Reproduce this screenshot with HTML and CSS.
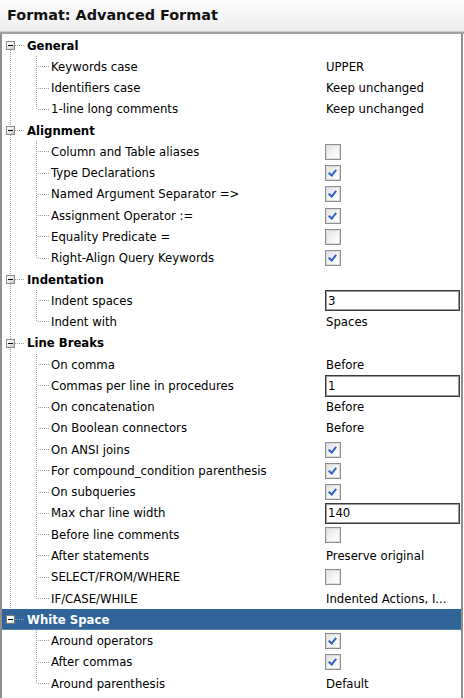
FILE: index.html
```html
<!DOCTYPE html>
<html>
<head>
<meta charset="utf-8">
<link rel="stylesheet" href="styles.css">
</head>
<body>
<div class="header">Format: Advanced Format</div>
<div class="tree">
  <div class="group">
    <div class="row root"><span class="exp"></span><span class="name">General</span></div>
    <div class="kids">
      <div class="row kid"><span class="name">Keywords case</span><span class="val">UPPER</span></div>
      <div class="row kid"><span class="name">Identifiers case</span><span class="val">Keep unchanged</span></div>
      <div class="row kid"><span class="name">1-line long comments</span><span class="val">Keep unchanged</span></div>
    </div>
  </div>
  <div class="group">
    <div class="row root"><span class="exp"></span><span class="name">Alignment</span></div>
    <div class="kids">
      <div class="row kid"><span class="name">Column and Table aliases</span><span class="val"><span class="cb"></span></span></div>
      <div class="row kid"><span class="name">Type Declarations</span><span class="val"><span class="cb on"></span></span></div>
      <div class="row kid"><span class="name">Named Argument Separator =&gt;</span><span class="val"><span class="cb on"></span></span></div>
      <div class="row kid"><span class="name">Assignment Operator :=</span><span class="val"><span class="cb on"></span></span></div>
      <div class="row kid"><span class="name">Equality Predicate =</span><span class="val"><span class="cb"></span></span></div>
      <div class="row kid"><span class="name">Right-Align Query Keywords</span><span class="val"><span class="cb on"></span></span></div>
    </div>
  </div>
  <div class="group">
    <div class="row root"><span class="exp"></span><span class="name">Indentation</span></div>
    <div class="kids">
      <div class="row kid"><span class="name">Indent spaces</span><span class="val"><span class="field">3</span></span></div>
      <div class="row kid"><span class="name">Indent with</span><span class="val">Spaces</span></div>
    </div>
  </div>
  <div class="group">
    <div class="row root"><span class="exp"></span><span class="name">Line Breaks</span></div>
    <div class="kids">
      <div class="row kid"><span class="name">On comma</span><span class="val">Before</span></div>
      <div class="row kid"><span class="name">Commas per line in procedures</span><span class="val"><span class="field">1</span></span></div>
      <div class="row kid"><span class="name">On concatenation</span><span class="val">Before</span></div>
      <div class="row kid"><span class="name">On Boolean connectors</span><span class="val">Before</span></div>
      <div class="row kid"><span class="name">On ANSI joins</span><span class="val"><span class="cb on"></span></span></div>
      <div class="row kid"><span class="name">For compound_condition parenthesis</span><span class="val"><span class="cb on"></span></span></div>
      <div class="row kid"><span class="name">On subqueries</span><span class="val"><span class="cb on"></span></span></div>
      <div class="row kid"><span class="name">Max char line width</span><span class="val"><span class="field">140</span></span></div>
      <div class="row kid"><span class="name">Before line comments</span><span class="val"><span class="cb"></span></span></div>
      <div class="row kid"><span class="name">After statements</span><span class="val">Preserve original</span></div>
      <div class="row kid"><span class="name">SELECT/FROM/WHERE</span><span class="val"><span class="cb"></span></span></div>
      <div class="row kid"><span class="name">IF/CASE/WHILE</span><span class="val">Indented Actions, I...</span></div>
    </div>
  </div>
  <div class="group last">
    <div class="row root selected"><span class="exp"></span><span class="name">White Space</span></div>
    <div class="kids">
      <div class="row kid"><span class="name">Around operators</span><span class="val"><span class="cb on"></span></span></div>
      <div class="row kid"><span class="name">After commas</span><span class="val"><span class="cb on"></span></span></div>
      <div class="row kid"><span class="name">Around parenthesis</span><span class="val">Default</span></div>
    </div>
  </div>
</div>
</body>
</html>
```
FILE: styles.css
```css
* { box-sizing: border-box; }
html, body { margin: 0; padding: 0; background: #fff; }
body {
  width: 464px;
  height: 698px;
  overflow: hidden;
  font-family: "DejaVu Sans", Verdana, sans-serif;
  font-size: 11.7px;
  color: #000;
}
.header {
  height: 34px;
  background: linear-gradient(#fbfbfb, #eeeeee);
  border-bottom: 2px solid #a2a2a2;
  box-shadow: inset 0 -1px 0 #cfcfcf;
  font-weight: bold;
  font-size: 14.4px;
  line-height: 31px;
  padding-left: 7px;
  color: #111;
}
.tree {
  width: 463px;
  height: 664px;
  padding-top: 1px;
  border-left: 2px solid #8f8f8f;
  border-right: 2px solid #8f8f8f;
  background: #fff;
}
.group { position: relative; }
.group::before {
  content: "";
  position: absolute;
  left: 8px;
  top: 10.6px;
  bottom: -10.6px;
  width: 1px;
  background: repeating-linear-gradient(to bottom, #a0a0a0 0 1px, transparent 1px 2px);
}
.group.last::before { display: none; }
.row {
  position: relative;
  height: 21.27px;
  display: grid;
  grid-template-columns: 323px 1fr;
  align-items: center;
  white-space: nowrap;
}
.root {
  display: flex;
  align-items: center;
  font-weight: bold;
}
.root::after {
  content: "";
  position: absolute;
  left: 13px;
  width: 10px;
  top: 10px;
  height: 1px;
  background: repeating-linear-gradient(to right, #a0a0a0 0 1px, transparent 1px 2px);
}
.exp {
  position: relative;
  z-index: 1;
  width: 9px;
  height: 9px;
  margin-left: 4px;
  border: 1px solid #8c8c8c;
  background: linear-gradient(135deg, #ffffff 0%, #e9e9e9 50%, #c4c4c4 100%);
  display: flex;
  align-items: center;
  justify-content: center;
}
.exp::before {
  content: "";
  width: 5px;
  height: 1px;
  background: #000;
}
.root .name { margin-left: 12px; }
.selected {
  background: #31659a;
  color: #fff;
  box-shadow: inset 0 -1px 0 #5b86b4;
}
.selected .exp {
  background: linear-gradient(135deg, #ffffff 0%, #eeeeee 60%, #d0d0d0 100%);
  border-color: #7a7a7a;
}
.kids { position: relative; }
.kids::before {
  content: "";
  position: absolute;
  left: 34px;
  top: 0;
  bottom: 10.6px;
  width: 1px;
  background: repeating-linear-gradient(to bottom, #a0a0a0 0 1px, transparent 1px 2px);
}
.kid::before {
  content: "";
  position: absolute;
  left: 35px;
  width: 12px;
  top: 10px;
  height: 1px;
  background: repeating-linear-gradient(to right, transparent 0 1px, #a0a0a0 1px 2px);
}
.kid .name { padding-left: 49px; overflow: hidden; }
.val {
  height: 100%;
  display: flex;
  align-items: center;
  padding-left: 1px;
  overflow: hidden;
}
.cb {
  width: 16px;
  height: 16px;
  margin-left: -1px;
  border: 1px solid #8e8e8e;
  box-shadow: inset 0 0 0 1px #dcdcdc;
  background: linear-gradient(135deg, #dedede 0%, #f4f4f4 50%, #ffffff 100%);
  position: relative;
}
.cb.on::after {
  content: "";
  position: absolute;
  left: 4px;
  top: 2px;
  width: 3px;
  height: 6px;
  border-right: 2.5px solid #2f62c9;
  border-bottom: 2.5px solid #2f62c9;
  transform: rotate(40deg);
}
.field {
  width: 100%;
  height: 100%;
  margin-left: -1px;
  border: 1px solid #3a3a3a;
  box-shadow: inset 0 0 0 1px #9a9a9a;
  display: flex;
  align-items: center;
  padding-left: 2px;
}
```
